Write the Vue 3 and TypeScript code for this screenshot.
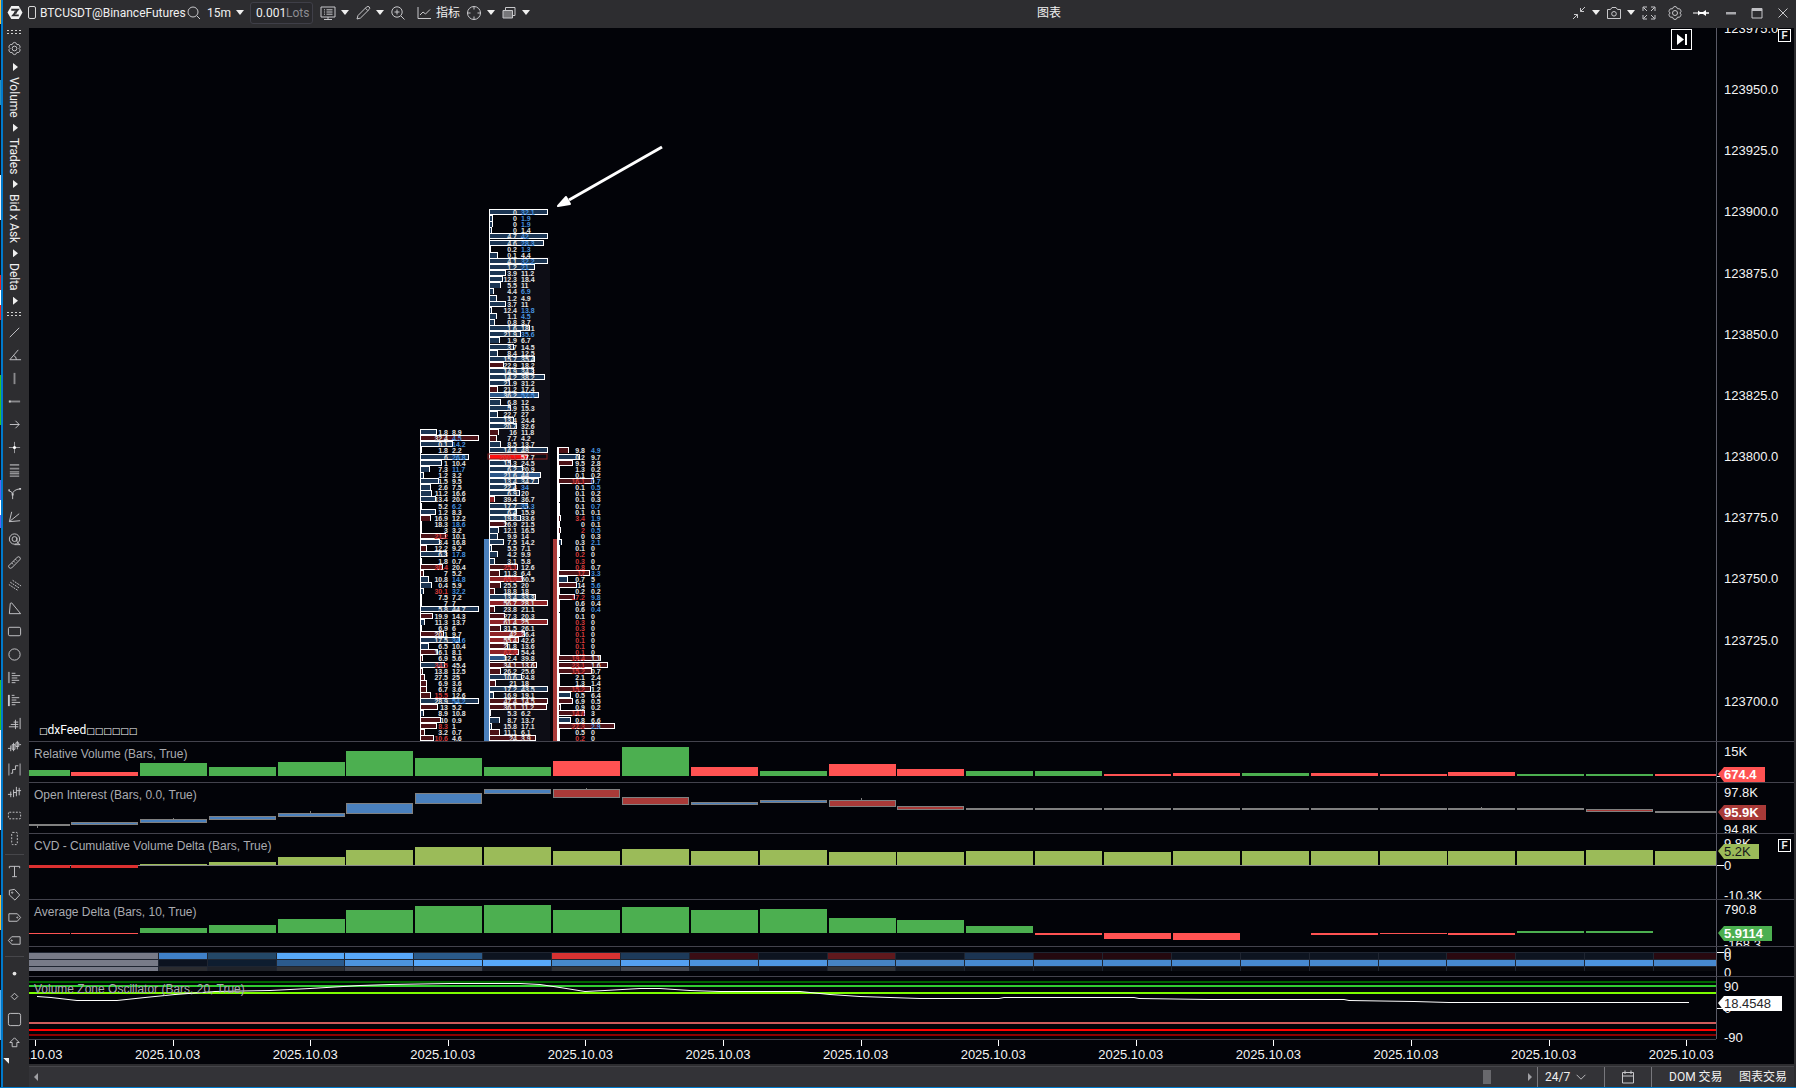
<script setup lang="ts">
import { ref } from 'vue'

/* ---------- icons (16 x 16 boxes) ---------- */
const icons: Record<string, string> = {
  gear: '<path d="M6.500 2 8 1.500 9.500 2 10.500 3.800 12.600 3.800 13.700 5.200 14 6.700 12.800 8 14 9.300 13.700 10.800 12.600 12.200 10.500 12.200 9.500 14 8 14.500 6.500 14 5.500 12.200 3.400 12.200 2.300 10.800 2 9.300 3.200 8 2 6.700 2.300 5.200 3.400 3.800 5.500 3.800Z"/><circle cx="8" cy="8" r="2.500"/>',
  search: '<circle cx="7" cy="7" r="5"/><path d="M11 11 14 14"/>',
  monitor: '<path d="M1 2H15V12H1ZM8 12V14M4 14.500H12M4 4.800H5M4 7H5M4 9.200H5M6.500 4.800H12.500M6.500 7H12.500M6.500 9.200H12.500"/>',
  pencil: '<path d="M2 14 3 10.500 11.500 2Q13 .8 14.300 2 15.400 3.300 14 4.600L5.500 13ZM10.500 3.300 12.800 5.600"/>',
  zoomin: '<circle cx="7" cy="7" r="5.200"/><path d="M11 11 14.500 14.500M4.500 7H9.500M7 4.500V9.500"/>',
  chart: '<path d="M2 2V13.500H15M4 10 7 7 9.500 9 14 4.500"/>',
  target: '<circle cx="8" cy="8" r="6.500"/><path d="M8 1V4.500M8 11.500V15M1 8H4.500M11.500 8H15"/>',
  layers: '<path d="M2 5.500H11.500V13H2Z" fill="#77777a"/><path d="M4.500 5V2.500H14V10.500H12"/>',
  shrink: '<path d="M2 14 6.500 9.500M3 9.500H6.500V13M14 2 9.500 6.500M9.500 3V6.500H13"/>',
  camera: '<path d="M1.500 4.500H4.500L6 2.500H10L11.500 4.500H14.500V13.500H1.500Z"/><circle cx="8" cy="8.800" r="2.300"/>',
  expand: '<path d="M2 6V2H6M2.500 2.500 6 6M10 2H14V6M13.500 2.500 10 6M2 10V14H6M2.500 13.500 6 10M14 10V14H10M13.500 13.500 10 10"/>',
  pin: '<path d="M0 8H6" stroke="#fff"/><path d="M5 5.500 7 7H10L13 5V11L10 9H7L5 10.500ZM13 7.300H16V8.700H13Z" fill="#fff" stroke="none"/>',
  min: '<path d="M3 7H13V9.500H3Z" fill="#a8a8ac" stroke="none"/>',
  max: '<path d="M3 3.500H13V13H3Z"/><path d="M3 3H13V6H3Z" fill="#c0c0c4" stroke="none"/>',
  close: '<path d="M3.500 3.500 12.500 12.500M12.500 3.500 3.500 12.500"/>',
  line: '<path d="M3 13 13 3"/>',
  angle: '<path d="M12 2 3 12.500H15M7 8Q10 9 10 12.500"/>',
  vline: '<path d="M8 2V14" stroke-width="2" stroke="#8a8a8d"/>',
  hline: '<path d="M2 8H14" stroke-width="2" stroke="#8a8a8d"/><path d="M2 8H4" stroke-width="2"/>',
  arrow: '<path d="M3 8H13M9 4 13 8 9 12"/>',
  cross: '<path d="M8 2V14M2 8H14" stroke="#a0a0a3"/><circle cx="8" cy="8" r="1.700" fill="#fff" stroke="none"/>',
  fib: '<path d="M3 2H13M3 6H13" stroke-width="2" stroke="#8a8a8d"/><path d="M3 9.500H13M3 11.500H13M3 14H13"/>',
  pitchfork: '<path d="M2 5Q6 6 6 9V14M6 9Q6 4 14 3"/><path d="M1.500 4.500H3M13 3H15M6 8V10" stroke-width="2"/>',
  fan: '<path d="M5 3 2.500 13.500 14 12.500M2.500 13.500 13 5"/>',
  spiral: '<circle cx="8" cy="7.500" r="5.500"/><circle cx="8" cy="7.500" r="2.600"/><path d="M10.600 6V10Q12 13 14 13.500H8"/>',
  ruler: '<path d="M1.800 11.500 11 2.300Q12.500 1.300 13.700 2.500 14.800 3.800 13.700 5L5 13.800Q3.500 14.700 2.300 13.500 1.300 12.500 1.800 11.500ZM5 8.500 6.500 10M7 6.500 8.500 8M9 4.500 10.500 6"/>',
  channel: '<path d="M2 7 12 13.500M3.500 4.500 13.500 11M6 2.500 15 8.500" stroke-dasharray="2 1"/>',
  triangle: '<path d="M3.500 2.500 2.500 13.500H14.500L5 2Z"/>',
  rect: '<rect x="1.500" y="3.500" width="13" height="9" rx="1.500"/>',
  circle: '<circle cx="8" cy="8" r="6"/>',
  profileA: '<path d="M2 2V14" stroke-width="2" stroke="#8a8a8d"/><path d="M5 3.500H9M5 6H14M5 8.500H11M5 11H13M5 13.500H9"/>',
  profileB: '<path d="M2 2V14" stroke-width="2"/><path d="M5 2.500H8M5 5H13M5 7.500H10M5 10H14M5 12.500H9"/>',
  profileC: '<path d="M14 2V14M2 11.500H12M4 9H12M7 6.500H12M9 4V14"/>',
  candlesA: '<path d="M1 10H4M4 7V13M7 4V13M5.500 6H8.500V11H5.500ZM11 2V11M9.500 4H12.500V8H9.500ZM13 6H15"/>',
  stepline: '<path d="M2 1.500V14.500M14 1.500V14.500" stroke="#8a8a8d" stroke-width="1.500"/><path d="M4 12H6V8H9V4H12"/>',
  candlesB: '<path d="M1 10H5M4 7V13M7 5V13M7 8H10M10 2V12M13 3V11M10 6H15"/>',
  dashH: '<rect x="1.500" y="4.500" width="13" height="7" rx="1" stroke-dasharray="2 1.500"/>',
  dashV: '<rect x="5" y="1.500" width="6" height="13" rx="1" stroke-dasharray="2 1.500"/>',
  text: '<path d="M2.500 4.500V2.500H13.500V4.500M8 2.500V13.500M5.500 13.500H10.500"/>',
  tag: '<path d="M2.500 3.500 8 2.500 13.500 8.500 8.500 14 2.500 8.500Z"/><circle cx="5.500" cy="6" r=".7"/>',
  tagRight: '<path d="M2 4H11L14.500 8 11 12H2Z"/><circle cx="11" cy="8" r=".6"/>',
  tagLeft: '<path d="M14 4H5L1.500 8 5 12H14Z"/><circle cx="5" cy="8" r=".6"/>',
  dot: '<circle cx="8" cy="8" r="2" fill="#e4e4e4" stroke="none"/>',
  diamond: '<path d="M8 4.500 11.500 8 8 11.500 4.500 8Z"/>',
  square: '<rect x="1.500" y="1.500" width="13" height="13" rx="2"/>',
  upArrow: '<path d="M8 3 13 8H10.500V12.500H5.500V8H3Z"/>',
  calendar: '<path d="M2.500 3.500H13.500V14H2.500ZM2.500 7H13.500M5 1.500V5M11 1.500V5"/>',
  chevron: '<path d="M3 5.500 8 10.500 13 5.500"/>',
}

const presets = ['Volume', 'Trades', 'Bid x Ask', 'Delta']
const tools = [
  'line', 'angle', 'vline', 'hline', 'arrow', 'cross', 'fib', 'pitchfork', 'fan', 'spiral', 'ruler', 'channel',
  'triangle', 'rect', 'circle', 'profileA', 'profileB', 'profileC', 'candlesA', 'stepline', 'candlesB', 'dashH', 'dashV',
]
const markers = ['text', 'tag', 'tagRight', 'tagLeft']
const shapes = ['dot', 'diamond', 'square', 'upArrow']

const lots = ref('0.001')
const frame = ref('15m')
const session = ref('24/7')
const scroll = ref(978)

/* ---------- price scale ---------- */
const prices = Array.from({ length: 12 }, (_, i) => ({
  label: (123975 - i * 25).toFixed(1),
  y: Math.round(5 + i * 61.15),
}))

/* ---------- clusters: bar width, bid, ask, flags ----------
   first flag letter: fill (b blue, r red, B/R strong, p peak, - none); L bid in red, A ask in blue */
type Row = { y: number; w: number; bid: string; ask: string; fill: string; bidHot: boolean; askHot: boolean }
const fills: Record<string, string> = { b: '#1b3553', r: '#4c1217', B: '#2c5687', R: '#8e2226', p: '#ff1010', '-': '#ffffff' }

function parse(first: number, src: string): Row[] {
  return src.trim().split(/\s*;\s*/).filter(Boolean).map((line, i) => {
    const [w, bid, ask, flags] = line.split(/\s+/)
    return {
      y: Math.round((first + i) * 6.115) + 181,
      w: Number(w), bid, ask,
      fill: fills[flags[0]],
      bidHot: flags.includes('L'),
      askHot: flags.includes('A'),
    }
  })
}

const columns = [
  {
    x: 391, bid: 28, ask: 32, base: 1,
    rows: parse(36, `
    16 1.8 8.9 b;58 32.4 4.5 rA;32 0.1 14.2 bA;1 1.8 2.2 -;48 6 26.8 bA;21 1 10.4 b;9 7.3 11.7 bA;3 1.2 3.2 b;
    18 1.5 9.5 b;10 2.6 7.5 b;11 11.2 16.6 b;15 13.4 20.6 b;1 5.2 6.2 -A;15 1.2 8.3 b;10 16.9 12.2 r;1 18.3 18.6 -A;
    1 3 3.2 -;25 21.2 10.1 rL;19 3.4 16.8 b;6 12.2 9.2 r;26 6.3 17.8 bA;1 1.8 0.7 -;22 30.4 20.4 rL;3 7 5.2 r;
    8 10.8 14.8 bA;11 0.4 5.9 b;3 30.1 32.2 bLA;1 7.5 7.2 -;1 7 7 -;58 5.8 44.7 b;12 19.9 14.3 r;4 11.3 13.7 b;
    1 6.9 6 -;23 20.1 9.7 r;39 17.5 34.6 bA;8 6.5 10.4 b;17 16.1 8.1 r;2 6.9 5.6 r;24 34.5 45.4 bL;2 13.8 12.5 r;
    4 27.5 25 r;6 6.9 3.6 r;6 6.7 3.6 r;10 15.5 12.6 rL;58 28.9 54.2 bA;17 13 5.2 r;3 8.9 10.8 b;20 10 0.9 r;
    16 8.3 1 rL;4 3.2 0.7 r;13 10.6 4.6 rL`),
  },
  {
    x: 460, bid: 28, ask: 32, base: 1,
    rows: parse(0, `
    58 0 32.1 bA;3 0 1.9 bA;3 0 1.9 bA;2 0 1.4 b;58 4.7 42 bA;54 4.6 28.3 bA;1 0.2 1.3 bA;8 0.1 4.4 b;58 4.1 32.2 bA;
    45 1.2 21 bA;16 3.9 11.2 b;13 12.3 18.4 b;11 5.5 11 b;4 4.4 6.9 bA;7 1.2 4.9 b;16 3.7 11 b;2 12.4 13.8 bA;
    7 1.1 4.5 bA;5 0.8 3.7 b;40 1.6 18.1 b;31 21.9 35.6 bA;10 1.9 6.7 b;24 3.7 14.5 b;8 8.4 12.5 b;45 15.7 35.4 b;
    14 22.9 18.2 r;44 14.9 34.3 b;55 14.2 38.2 b;20 21.9 31.2 b;8 21.2 17.4 r;49 36.2 57.5 BA;11 6.8 12 b;
    21 5.9 15.3 b;8 22.7 27 b;24 13.4 24.4 b;27 20.7 32.6 b;9 16 11.8 r;7 7.7 4.2 r;11 8.5 13.7 b;58 14.4 48 b;
    38 200.1 57.7 pL;21 15.3 24.5 b;33 6.2 20.9 b;51 21.6 44 B;49 13.4 34.7 b;26 22.4 34 bA;30 6.9 20 b;5 39.4 36.7 R;
    38 17.7 35.3 bA;27 6.4 15.9 b;31 19.8 33.6 b;16 26.9 21.5 r;9 12.1 16.5 b;8 9.9 14 b;14 7.5 14.2 b;2 5.5 7.1 b;
    8 4.2 9.9 b;5 3.1 5.8 b;28 25.1 12.6 rL;10 11.3 6.4 r;33 65.3 50.5 RL;11 25.5 20 r;5 18.8 18 r;46 13.4 33.3 b;
    58 56.7 28.1 R;5 23.8 21.1 r;15 27.3 20.3 r;58 61.4 25 R;11 31.5 26.1 r;35 42 26.4 R;29 55.4 42.6 R;18 21.8 13.6 r;
    29 67.3 54.4 RL;16 32.4 39.8 B;47 34.1 13.6 r;11 26.2 25.6 r;32 10.6 24.8 b;6 21 18 r;58 17.2 43.5 b;4 16.9 19.1 b;
    58 47.4 14.5 r;57 36.1 11.2 r;1 5.3 6.2 b;10 8.7 13.7 b;2 15.8 17.1 b;10 11.1 6.1 r;46 24 3.9 r`),
  },
  {
    x: 529, bid: 27, ask: 33, base: 2,
    rows: parse(39, `
    10 9.8 4.9 rA;21 0.2 9.7 b;14 9.5 2.8 r;1 1.3 0.2 -;1 0.1 0.2 -;35 16.1 0.7 rLA;1 0.1 0.5 -A;1 0.1 0.2 -;
    1 0.1 0.3 -;1 0.1 0.7 -A;1 0.1 0.1 -;2 3.4 1.9 rLA;1 0 0.1 -;2 2 0.5 rLA;1 0 0.3 -;3 0.3 2.1 bA;1 0.1 0 -;
    1 0.2 0 -L;1 0.3 0 -L;1 0.8 0.7 -L;31 17 3.3 rLA;9 0.7 5 b;18 14 5.6 rA;1 0.2 0.2 -;16 17.2 9.8 rLA;1 0.6 0.4 -;
    1 0.6 0.4 -A;1 0.1 0 -;1 0.3 0 -L;1 0.3 0 -L;1 0.1 0 -L;1 0.1 0 -L;1 0.1 0 -L;1 0.1 0 -L;42 19.4 1.1 rL;
    49 23.1 1.6 rL;33 15.2 0.7 rL;1 2.1 2.4 -;1 1.3 1.4 -;32 15.2 1.2 rL;12 0.5 6.4 b;14 6.9 0.5 r;2 0.9 0.2 r;
    26 14.6 3 rL;12 0.8 6.6 b;56 27.3 2.9 rLA;1 0.5 0 -;1 0.2 0 -L`),
  },
]

/* ---------- indicator bars ---------- */
const GREEN = '#4caf50'
const RED = '#ff5252'
const slot = (i: number) => {
  const x = i === 0 ? 0 : Math.round(42 + (i - 1) * 68.87)
  const end = i === 0 ? 41 : x + 67
  return { x, width: Math.min(end, 1687) - x }
}

const relHeights = [6, 4, 13, 9, 14, 25, 18, 9, 15, 29, 9, 5, 12, 7, 5, 5, 2, 3, 3, 3, 2, 4, 2, 2, 2]
const relColors = 'grggggggrgrgrrggrrgrrrggr'
const relBars = relHeights.map((h, i) => ({ ...slot(i), y: 34 - h, height: h, fill: relColors[i] === 'g' ? GREEN : RED }))

const oi: [number, number, string][] = [
  [41, 2, 'n'], [39, 3, 'b'], [36, 4, 'b'], [33, 4, 'b'], [30, 4, 'b'], [20, 11, 'b'], [10, 11, 'b'], [6, 5, 'b'],
  [6, 9, 'r'], [14, 8, 'r'], [19, 3, 'b'], [17, 3, 'b'], [17, 7, 'r'], [23, 4, 'r'], [25, 2, 'n'], [25, 2, 'n'],
  [25, 2, 'n'], [25, 2, 'n'], [25, 2, 'n'], [25, 2, 'n'], [25, 2, 'n'], [25, 2, 'n'], [25, 2, 'n'], [26, 3, 'r'], [28, 2, 'n'],
]
const oiFill: Record<string, string> = { n: '#808080', b: '#4a80bd', r: '#a93a38' }
const oiBars = oi.map(([y, h, c], i) => ({ ...slot(i), y, height: h, fill: oiFill[c] }))
const oiWicks = [[8, 43], [144, 35], [281, 28], [557, 5], [832, 15], [1452, 24]]

const cvd = [-3, -3, 1, 3, 8, 15, 18, 18, 14, 16, 14, 15, 13, 13, 14, 14, 13, 14, 14, 14, 14, 14, 14, 15, 14]
const cvdBars = cvd.map((h, i) => ({ ...slot(i), y: h > 0 ? 31 - h : 31, height: Math.abs(h), fill: h > 0 ? '#9bbb59' : '#dc3030' }))

const avg = [-1, -1, 5, 8, 14, 23, 27, 28, 23, 26, 23, 24, 15, 13, 7, -2, -6, -7, 0, -2, -1, -2, 2, 2, 0]
const avgBars = avg.map((h, i) => ({ ...slot(i), y: h > 0 ? 33 - h : 33, height: Math.abs(h), fill: h > 0 ? GREEN : RED }))

const heat = [
  '#787b88 #3f80c8 #234767 #57a8f8 #58a8fa #2a5a8a #0d1420 #d63232 #1d3a5a #3a0d14 #0d1420 #5f191d #0d1420 #1b3452 #24090f #24090f #0d1420 #0d1420 #0d1420 #0d1420 #2a0910 #0d1420 #0d1420 #280910',
  '#787b88 #0c1320 #0e1d30 #2b5a8d #4c93de #58a8fa #58a8fa #4789cc #549ff0 #4c93de #4f96e2 #4683c4 #4683c4 #4789d0 #4789d0 #4789d0 #4789d0 #4789d0 #4789d0 #4789d0 #4789d0 #4789d0 #4c93de #4789d0',
  '#787b88 #2b2c30 #1f2229 #303237 #434650 #434650 #1c1e25 #33353a #454851 #1b232c #13151e #313338 #161a21 #101218 #101218 #0b0d12 #0b0d12 #0a0b0f #0b0c12 #0a0b0f #0a0b0f #0a0b0f #0a0b0f #0a0b0f',
]
const heatCells = heat.flatMap((row, r) =>
  row.split(' ').map((fill, i) => {
    const x = i === 0 ? 0 : i === 1 ? 130 : Math.round(42 + i * 68.87) - 1
    const next = i === 0 ? 130 : Math.min(Math.round(42 + (i + 1) * 68.87) - 1, 1688)
    return { x, width: next - x - 1, y: 6 + r * 7, height: r === 2 ? 4 : 6, fill }
  }),
)

const zones = [
  [4, '#006400'], [8, '#32cd32'], [15, '#7cfc00'], [45, '#cd5c5c'], [52, '#ff0000'], [57, '#8b0000'],
] as const
const oscillator: [number, number][] = [
  [8, 19], [22, 20], [48, 23], [88, 23], [116, 20], [146, 17], [186, 14], [241, 13], [281, 11], [331, 8], [361, 7],
  [421, 6], [491, 6], [511, 7], [531, 10], [556, 14], [576, 13], [611, 11], [631, 11], [661, 13], [691, 14], [771, 14],
  [801, 17], [831, 19], [861, 20], [891, 21], [970, 21], [975, 20], [1105, 20], [1110, 21], [1180, 22], [1315, 22],
  [1320, 23], [1385, 24], [1420, 25], [1660, 25],
]
/* centre the 1px stroke on the pixel row */
const oscillatorPoints = oscillator.map(([x, y]) => `${x},${y + 0.5}`).join(' ')

/* ---------- panes ---------- */
type Tag = { y: number; w: number; text: string; fill: string; color: string; bold?: boolean }
type Pane = {
  id: string; title: string; height: number
  labels: [number, string][]; ticks: number[]; tag?: Tag; fixed?: boolean
}
const panes: Pane[] = [
  { id: 'rel', title: 'Relative Volume (Bars, True)', height: 41, labels: [[9, '15K'], [37, '0']], ticks: [34], tag: { y: 25, w: 47, text: '674.4', fill: RED, color: '#fff', bold: true } },
  { id: 'oi', title: 'Open Interest (Bars, 0.0, True)', height: 51, labels: [[9, '97.8K'], [46, '94.8K']], ticks: [], tag: { y: 22, w: 48, text: '95.9K', fill: '#a93a38', color: '#fff', bold: true } },
  { id: 'cvd', title: 'CVD - Cumulative Volume Delta (Bars, True)', height: 66, labels: [[9, '9.8K'], [31, '0'], [61, '-10.3K']], ticks: [31], tag: { y: 10, w: 41, text: '5.2K', fill: '#9bbb59', color: '#16181c' }, fixed: true },
  { id: 'avg', title: 'Average Delta (Bars, 10, True)', height: 47, labels: [[9, '790.8'], [44, '-168.3']], ticks: [], tag: { y: 26, w: 54, text: '5.9114', fill: GREEN, color: '#fff', bold: true } },
  { id: 'heat', title: '', height: 30, labels: [[5, '0'], [9, '0'], [25, '0']], ticks: [5] },
  { id: 'vzo', title: 'Volume Zone Oscillator (Bars, 20, True)', height: 63, labels: [[9, '90'], [31, '0'], [60, '-90']], ticks: [31], tag: { y: 19, w: 64, text: '18.4548', fill: '#fff', color: '#26262a' } },
]

const dates = Array.from({ length: 13 }, (_, i) => (100 * (6 + i * 137.6)) / 1687 + '%')
</script>

<template>
  <div class="window">
    <header class="titlebar">
      <div class="group">
        <svg class="logo" viewBox="0 0 16 16" aria-hidden="true">
          <path d="M4 1H12L16 8 12 15H4L0 8Z" fill="#f2f2f2" />
          <path d="M4 5H11L6 11H12M7 8H10" fill="none" stroke="#2d2d30" stroke-width="2" />
        </svg>
        <span class="link-box"></span>
        <button class="symbol">BTCUSDT@BinanceFutures</button>
        <button class="ico search" aria-label="Search"><svg viewBox="0 0 16 16" v-html="icons.search"></svg></button>
        <select v-model="frame" class="frame" aria-label="Timeframe"><option>15m</option><option>1h</option></select>
        <span class="caret"></span>
        <label class="lots"><input v-model="lots" aria-label="Lots" /><span>Lots</span></label>
        <button class="ico" aria-label="Template"><svg viewBox="0 0 16 16" v-html="icons.monitor"></svg></button>
        <span class="caret"></span>
        <button class="ico" aria-label="Draw"><svg viewBox="0 0 16 16" v-html="icons.pencil"></svg></button>
        <span class="caret"></span>
        <button class="ico" aria-label="Zoom in"><svg viewBox="0 0 16 16" v-html="icons.zoomin"></svg></button>
        <button class="indicator"><svg viewBox="0 0 16 16" v-html="icons.chart"></svg>指标</button>
        <button class="ico" aria-label="Crosshair"><svg viewBox="0 0 16 16" v-html="icons.target"></svg></button>
        <span class="caret"></span>
        <button class="ico" aria-label="Layers"><svg viewBox="0 0 16 16" v-html="icons.layers"></svg></button>
        <span class="caret"></span>
      </div>
      <h1>图表</h1>
      <div class="group right">
        <button class="ico" aria-label="Shrink"><svg viewBox="0 0 16 16" v-html="icons.shrink"></svg></button>
        <span class="caret"></span>
        <button class="ico" aria-label="Snapshot"><svg viewBox="0 0 16 16" v-html="icons.camera"></svg></button>
        <span class="caret"></span>
        <button class="ico" aria-label="Full screen"><svg viewBox="0 0 16 16" v-html="icons.expand"></svg></button>
        <button class="ico wide" aria-label="Settings"><svg viewBox="0 0 16 16" v-html="icons.gear"></svg></button>
        <button class="ico" aria-label="Pin"><svg viewBox="0 0 16 16" v-html="icons.pin"></svg></button>
        <div class="system">
          <button class="ico" aria-label="Minimize"><svg viewBox="0 0 16 16" v-html="icons.min"></svg></button>
          <button class="ico" aria-label="Maximize"><svg viewBox="0 0 16 16" v-html="icons.max"></svg></button>
          <button class="ico" aria-label="Close"><svg viewBox="0 0 16 16" v-html="icons.close"></svg></button>
        </div>
      </div>
    </header>

    <div class="body">
      <aside class="sidebar">
        <span class="grip"></span>
        <button class="gear" aria-label="Settings"><svg viewBox="0 0 16 16" v-html="icons.gear"></svg></button>
        <span class="side-caret"></span>
        <template v-for="p in presets" :key="p">
          <button class="preset">{{ p }}</button>
          <span class="side-caret"></span>
        </template>
        <span class="grip low"></span>
        <button v-for="t in tools" :key="t" class="tool" :aria-label="t"><svg viewBox="0 0 16 16" v-html="icons[t]"></svg></button>
        <hr />
        <button v-for="t in markers" :key="t" class="tool" :aria-label="t"><svg viewBox="0 0 16 16" v-html="icons[t]"></svg></button>
        <hr />
        <button v-for="t in shapes" :key="t" class="tool" :aria-label="t"><svg viewBox="0 0 16 16" v-html="icons[t]"></svg></button>
        <span class="corner"></span>
      </aside>

      <main class="work">
        <section class="price">
          <div class="plot">
            <svg class="canvas" role="img" aria-label="Cluster chart">
              <rect x="460" y="229" width="61" height="100%" fill="#0d0d15" />
              <rect x="455" y="511" width="5" height="100%" fill="#4a80bd" />
              <rect x="524" y="511" width="5" height="100%" fill="#a93a38" />
              <g v-for="c in columns" :key="c.x" shape-rendering="crispEdges">
                <g v-for="r in c.rows" :key="r.y">
                  <rect :x="c.x" :y="r.y" :width="r.w + 1" height="6" fill="#fff" />
                  <rect v-if="r.w > 1" :x="c.x + 1" :y="r.y + 1" :width="r.w - 1" height="5" :fill="r.fill" />
                  <rect v-if="r.w > 11" :x="c.x + 1" :y="r.y + 5" :width="r.w" height="1" fill="#fff" />
                </g>
                <rect :x="c.x - c.base + 1" :y="c.rows[0].y" :width="c.base" height="100%" fill="#fff" />
              </g>
              <rect x="459" y="426" width="59" height="5" fill="none" stroke="#8c2020" />
              <g v-for="c in columns" :key="'t' + c.x" class="figures">
                <template v-for="r in c.rows" :key="r.y">
                  <text :x="c.x + c.bid" :y="r.y + 6" text-anchor="end" :fill="r.bidHot ? '#d03a3a' : '#e2e2e2'">{{ r.bid }}</text>
                  <text :x="c.x + c.ask" :y="r.y + 6" :fill="r.askHot ? '#4791de' : '#e2e2e2'">{{ r.ask }}</text>
                </template>
              </g>
              <path d="M633 119 540 172" stroke="#fff" stroke-width="3" fill="none" />
              <path d="M529 178 537 169 541 176Z" fill="#fff" stroke="#fff" stroke-width="2" stroke-linejoin="round" />
            </svg>
            <span class="feed"><i>□</i>dxFeed<i>□□□□□□</i></span>
            <button class="latest" aria-label="Go to latest bar"><svg viewBox="0 0 19 19"><path d="M5 4 12 9.500 5 15ZM13 4H15V15H13Z" fill="#fff" stroke="none" /></svg></button>
          </div>
          <div class="axis">
            <svg class="canvas">
              <text v-for="p in prices" :key="p.label" x="7" :y="p.y">{{ p.label }}</text>
            </svg>
            <button class="fix">F</button>
          </div>
        </section>

        <section v-for="p in panes" :key="p.id" class="pane" :style="{ height: p.height + 'px' }">
          <div class="plot">
            <svg class="canvas" :viewBox="`0 0 1687 ${p.height - 1}`" preserveAspectRatio="none" shape-rendering="crispEdges">
              <template v-if="p.id === 'rel'">
                <rect v-for="(b, i) in relBars" :key="i" v-bind="b" />
              </template>
              <template v-else-if="p.id === 'oi'">
                <rect v-for="(w, i) in oiWicks" :key="'w' + i" :x="w[0]" :y="w[1]" width="1" height="2" fill="#808080" />
                <template v-for="(b, i) in oiBars" :key="i">
                  <rect :x="b.x" :y="b.y" :width="b.width" :height="b.height" fill="#808080" />
                  <rect v-if="b.height > 2" :x="b.x + 1" :y="b.y + 1" :width="b.width - 2" :height="b.height - 2" :fill="b.fill" />
                </template>
              </template>
              <template v-else-if="p.id === 'cvd'">
                <rect x="0" y="31" width="1687" height="1" fill="#8a8a8a" />
                <rect v-for="(b, i) in cvdBars" :key="i" v-bind="b" />
              </template>
              <template v-else-if="p.id === 'avg'">
                <rect v-for="(b, i) in avgBars" :key="i" v-bind="b" />
              </template>
              <template v-else-if="p.id === 'heat'">
                <rect x="0" y="5" width="1687" height="19" fill="#1f2531" />
                <rect v-for="(b, i) in heatCells" :key="i" v-bind="b" />
              </template>
              <template v-else>
                <rect v-for="z in zones" :key="z[0]" x="0" :y="z[0]" width="1687" height="2" :fill="z[1]" />
                <polyline :points="oscillatorPoints" fill="none" stroke="#fff" shape-rendering="auto" />
              </template>
            </svg>
            <span v-if="p.title" class="title">{{ p.title }}</span>
          </div>
          <div class="axis">
            <svg class="canvas" :class="{ spill: p.id === 'vzo' }">
              <text v-for="(l, i) in p.labels" :key="i" x="7" :y="l[0] + 5">{{ l[1] }}</text>
              <rect v-for="t in p.ticks" :key="'k' + t" x="0" :y="t" width="7" height="1" fill="#fff" />
              <g v-if="p.tag" :transform="`translate(1 ${p.tag.y})`">
                <polygon :points="`0,7 6,0 ${p.tag.w},0 ${p.tag.w},15 6,15`" :fill="p.tag.fill" />
                <text x="6" y="12" :style="{ fill: p.tag.color }" :class="{ bold: p.tag.bold }">{{ p.tag.text }}</text>
              </g>
            </svg>
            <button v-if="p.fixed" class="fix low">F</button>
          </div>
        </section>

        <section class="dates">
          <div class="plot">
            <svg class="canvas">
              <template v-for="d in dates" :key="d">
                <rect :x="d" y="0" width="1" height="6" fill="#fff" shape-rendering="crispEdges" />
                <text :x="d" y="19" dx="-5" text-anchor="middle">2025.10.03</text>
              </template>
            </svg>
          </div>
          <div class="axis"></div>
        </section>

        <footer class="status">
          <span class="scroll-caret left"></span>
          <input v-model="scroll" class="scroll" type="range" min="0" max="1000" aria-label="Chart position" />
          <span class="scroll-caret"></span>
          <label class="cell session">
            <select v-model="session" aria-label="Session"><option>24/7</option><option>RTH</option></select>
            <svg class="chev" viewBox="0 0 16 16" v-html="icons.chevron"></svg>
          </label>
          <button class="cell cal" aria-label="Calendar"><svg viewBox="0 0 16 16" v-html="icons.calendar"></svg></button>
          <div class="cell trade"><button>DOM 交易</button><button>图表交易</button></div>
        </footer>
      </main>
    </div>
  </div>
</template>

<style>
html,
body {
  margin: 0;
  background: #2d2d30;
}
</style>

<style scoped>
* {
  box-sizing: border-box;
}
.window {
  display: flex;
  flex-direction: column;
  min-height: 100vh;
  padding: 0 2px 0 3px;
  border-bottom: 1px solid #007acc;
  background:
    linear-gradient(90deg, transparent 1px, #007acc 1px) 0 0 / 3px 100% no-repeat,
    linear-gradient(#f0c040 0 24px, #10141c 24px 80px, #2a90c0 80px 105px, #10141c 105px 175px, #e8eef4 175px 220px, #10141c 220px 275px, #e02020 275px 290px, #fff 290px 305px, #e02020 305px 320px, #10141c 320px 375px, #30c020 375px 425px, #10141c 425px 480px, #6060f0 480px 500px, #fff 500px 515px, #6060f0 515px 528px, #10141c 528px 680px, #30c020 680px 730px, #e8eef4 730px 830px, #10141c 830px 895px, #f0c040 895px 930px, #10141c 930px 990px, #60b0e8 990px 1040px, #10141c 1040px) 0 0 / 1px 100% no-repeat,
    #2d2d30;
  color: #f0f0f0;
  font: 12px/16px Roboto, "Noto Sans CJK SC", sans-serif;
}
button,
select,
input {
  margin: 0;
  padding: 0;
  border: 0;
  background: none;
  color: inherit;
  font: inherit;
  appearance: none;
  outline: 0;
}
svg {
  display: block;
  fill: none;
  stroke: #c8c8cb;
}
.titlebar {
  display: flex;
  align-items: center;
  height: 28px;
  padding-bottom: 3px;
}
.group {
  display: flex;
  flex: 1;
  align-items: center;
  height: 22px;
  padding-left: 4px;
}
.group.right {
  justify-content: flex-end;
  padding: 0 3px 0 0;
}
h1 {
  margin: 0;
  padding-left: 300px;
  font-size: 12px;
  font-weight: 400;
}
.logo {
  width: 16px;
  height: 15px;
  stroke: none;
}
.link-box {
  width: 8px;
  height: 13px;
  margin: 0 4px 0 5px;
  border: 1px solid #d8d8d8;
  border-radius: 2px;
}
.symbol {
  width: 145px;
  white-space: nowrap;
  text-align: left;
}
.ico svg,
.indicator svg {
  width: 16px;
  height: 16px;
}
.search {
  margin: 0 5px 0 1px;
}
.frame {
  width: 24px;
}
.caret {
  width: 8px;
  height: 5px;
  margin: 0 6px 0 5px;
  background: #f0f0f0;
  clip-path: polygon(0 0, 100% 0, 50% 100%);
}
.lots {
  display: flex;
  align-items: center;
  width: 63px;
  height: 22px;
  margin-right: 7px;
  padding-left: 5px;
  border: 1px solid #3f3f48;
  border-radius: 3px;
  background: #29292d;
}
.lots input {
  width: 30px;
}
.lots span {
  color: #8c8c92;
}
.indicator {
  display: flex;
  align-items: center;
  gap: 4px;
  margin: 0 6px 0 10px;
}
.wide {
  margin: 0 10px;
}
.system {
  display: flex;
  gap: 10px;
  margin-left: 14px;
}
.body {
  display: flex;
  flex: 1;
}
.sidebar {
  display: flex;
  flex-direction: column;
  width: 26px;
  padding-right: 4px;
  background: #2d2d30;
}
.grip {
  height: 6px;
  margin: 1px 2px 5px 3px;
  background: radial-gradient(circle, #d0d0d0 0 1px, transparent 1px) 0 0 / 4px 3px;
}
.grip.low {
  margin-top: 0;
  margin-bottom: 4px;
}
.gear,
.tool {
  display: flex;
  align-items: center;
  justify-content: center;
  height: 23px;
}
.gear {
  height: 17px;
}
.gear svg,
.tool svg {
  width: 15px;
  height: 15px;
}
.side-caret {
  width: 5px;
  height: 8px;
  margin: 6px 10px;
  background: #f0f0f0;
  clip-path: polygon(0 0, 100% 50%, 0 100%);
}
.preset {
  align-self: center;
  writing-mode: vertical-rl;
  white-space: nowrap;
}
.sidebar hr {
  width: 19px;
  height: 1px;
  margin: 4px 2px 5px;
  border: 0;
  background: #46464a;
}
.corner {
  width: 6px;
  height: 6px;
  margin-top: 4px;
  background: #f0f0f0;
  clip-path: polygon(0 0, 100% 0, 100% 100%);
}
.work {
  display: flex;
  flex: 1;
  flex-direction: column;
  min-width: 0;
}
.price,
.pane,
.dates {
  display: flex;
  background: #020308;
}
.price {
  flex: 1;
}
.pane {
  border-top: 1px solid #43434d;
}
.plot,
.axis {
  position: relative;
}
.plot {
  flex: 1;
  min-width: 0;
}
.axis {
  width: 78px;
  border-left: 1px solid #5a5a66;
}
.canvas {
  position: absolute;
  inset: 0;
  width: 100%;
  height: 100%;
  stroke: none;
}
.spill {
  overflow: visible;
}
.axis text,
.dates text {
  fill: #f4f4f4;
  font: 13px "Liberation Sans", Arial, sans-serif;
}
.axis text.bold {
  font-weight: 700;
}
.figures {
  font: bold 7px "Liberation Sans", Arial, sans-serif;
}
.feed {
  position: absolute;
  bottom: 2px;
  left: 10px;
  color: #fff;
}
.feed i {
  font: 9px/16px "DejaVu Sans", sans-serif;
}
.latest {
  position: absolute;
  top: 1px;
  right: 24px;
  width: 21px;
  height: 21px;
  border: 1px solid #fff;
}
.fix {
  position: absolute;
  top: 1px;
  right: 3px;
  width: 13px;
  height: 13px;
  border: 1px solid #fff;
  background: #020308;
  font: bold 10px/11px "Liberation Sans", Arial, sans-serif;
}
.fix.low {
  top: 5px;
}
.title {
  position: absolute;
  top: 4px;
  left: 5px;
  color: #a9abb0;
  font: 12px/16px "Liberation Sans", Arial, sans-serif;
}
.dates {
  height: 25px;
}
.dates .plot {
  border-top: 1px solid #43434d;
}
.dates .axis {
  border: 0;
}
.status {
  display: flex;
  align-items: center;
  height: 21px;
  margin-top: 2px;
  border-top: 1px solid #46464a;
  background: #333337;
}
.scroll-caret {
  width: 4px;
  height: 8px;
  margin: 0 5px;
  background: #a0a0a4;
  clip-path: polygon(0 0, 100% 50%, 0 100%);
}
.scroll-caret.left {
  clip-path: polygon(100% 0, 0 50%, 100% 100%);
}
.scroll {
  flex: 1;
  height: 14px;
}
.scroll::-webkit-slider-thumb {
  width: 8px;
  height: 14px;
  background: #68686c;
  appearance: none;
}
.cell {
  display: flex;
  align-items: center;
  height: 20px;
  border-left: 1px solid #77777c;
}
.session {
  width: 67px;
  padding-left: 7px;
}
.session select {
  width: 29px;
}
.chev {
  width: 14px;
  height: 14px;
}
.cal {
  justify-content: center;
  width: 47px;
}
.cal svg {
  width: 16px;
  height: 16px;
}
.trade {
  justify-content: space-between;
  width: 143px;
  padding: 0 7px 0 17px;
}
.trade button {
  white-space: nowrap;
}
</style>
